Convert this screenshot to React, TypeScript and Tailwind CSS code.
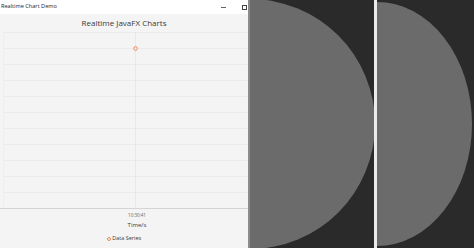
const ui = { fontFamily: '"Open Sans", "Noto Sans", "Liberation Sans", sans-serif' };

function TitleBar() {
  return (
    <div className="h-[14px] bg-white flex items-center justify-between pl-[1px] pr-[1px]">
      <span className="text-[5.6px] leading-none text-[#222]">Realtime Chart Demo</span>
      <div className="flex items-center gap-[16px]">
        <span className="w-[5px] h-[1px] bg-[#666]" />
        <span className="w-[5px] h-[5px] border border-[#444]" />
      </div>
    </div>
  );
}

function Plot() {
  const rows = Array.from({ length: 11 }, (_, i) => 0.5 + i * 16);
  return (
    <svg width={248} height={178} className="block">
      {rows.map((y) => (
        <line key={y} x1={3} x2={247} y1={y} y2={y} stroke="#ebebeb" strokeWidth={1} />
      ))}
      <line x1={3.5} x2={3.5} y1={0} y2={176} stroke="#efefef" strokeWidth={1} />
      <line x1={135.5} x2={135.5} y1={0} y2={176} stroke="#e8e8e8" strokeWidth={1} />
      <line x1={0} x2={248} y1={176.5} y2={176.5} stroke="#d4d4d4" strokeWidth={1} />
      <circle cx={135.5} cy={16.5} r={1.8} fill="#f6ece6" stroke="#eb8a5e" strokeWidth={1} />
    </svg>
  );
}

function ChartWindow() {
  return (
    <div className="w-[248px] h-full flex flex-col shrink-0" style={ui}>
      <TitleBar />
      <div className="flex-1 bg-[#f4f4f4] flex flex-col">
        <div className="h-[18px] flex items-center justify-center text-[8px] text-[#3a3a3a] leading-none">
          Realtime JavaFX Charts
        </div>
        <Plot />
        <div className="h-[10px] flex items-center justify-center pl-[26px] text-[4.5px] text-[#666] leading-none">
          10:30:41
        </div>
        <div className="h-[10px] flex items-center justify-center pl-[26px] text-[6px] text-[#3a3a3a] leading-none">
          Time/s
        </div>
        <div className="flex-1 flex items-center justify-center gap-[1.5px] text-[5.5px] text-[#3a3a3a] leading-none">
          <span className="w-[4px] h-[4px] rounded-full border border-[#eb8a5e]" />
          Data Series
        </div>
      </div>
    </div>
  );
}

export default function App() {
  return (
    <div className="w-[474px] h-[248px] flex overflow-hidden bg-[#2a2a2a]">
      <ChartWindow />
      <div className="w-[2px] h-full bg-[#8c8c8c] shrink-0" />
      <div className="w-[124px] h-full shrink-0 overflow-hidden">
        <svg width={124} height={248} className="block">
          <circle cx={0} cy={124} r={125} fill="#6b6b6b" />
        </svg>
      </div>
      <div className="w-[3px] h-full bg-[#ececec] shrink-0" />
      <div className="flex-1 h-full overflow-hidden">
        <svg width={97} height={248} className="block">
          <ellipse cx={0} cy={124} rx={95} ry={122} fill="#6b6b6b" />
        </svg>
      </div>
    </div>
  );
}
